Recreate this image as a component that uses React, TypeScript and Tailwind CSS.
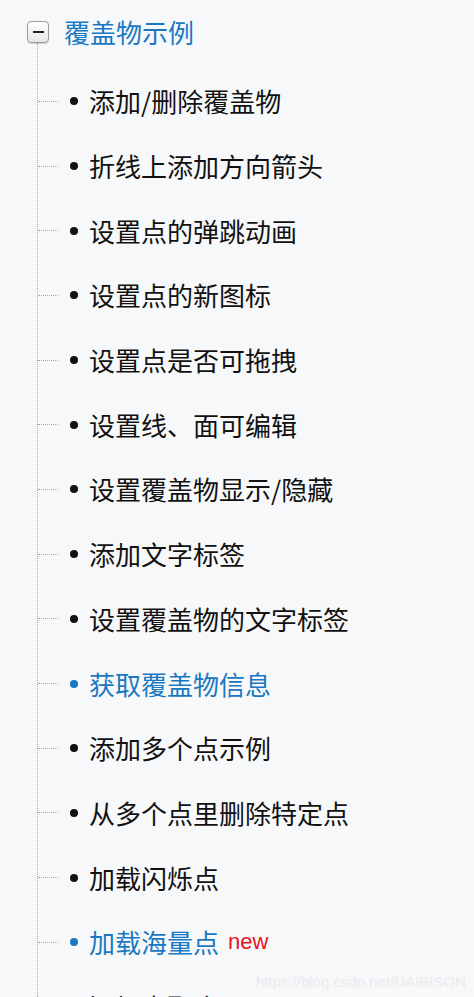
import React from "react";

const items: { text: string; active?: boolean; isNew?: boolean }[] = [
  { text: "添加/删除覆盖物" },
  { text: "折线上添加方向箭头" },
  { text: "设置点的弹跳动画" },
  { text: "设置点的新图标" },
  { text: "设置点是否可拖拽" },
  { text: "设置线、面可编辑" },
  { text: "设置覆盖物显示/隐藏" },
  { text: "添加文字标签" },
  { text: "设置覆盖物的文字标签" },
  { text: "获取覆盖物信息", active: true },
  { text: "添加多个点示例" },
  { text: "从多个点里删除特定点" },
  { text: "加载闪烁点" },
  { text: "加载海量点", active: true, isNew: true },
  { text: "添加点聚合" },
];

export default function App() {
  return (
    <div
      className="relative h-[997px] w-full overflow-hidden bg-[#f7f8fa]"
      style={{ fontFamily: '"Noto Sans CJK SC", "Noto Sans", sans-serif' }}
    >
      <div className="flex h-[63px] items-center pl-[27px]">
        <div className="flex h-[22px] w-[22px] items-center justify-center rounded-[4px] border border-[#9a9a9a] bg-gradient-to-b from-white to-[#e6e6e6] shadow-[0_1px_1px_rgba(0,0,0,0.15)]">
          <div className="h-[2px] w-[11px] bg-[#222]" />
        </div>
        <span className="ml-[15px] text-[26px] leading-none text-[#1a78c2]">覆盖物示例</span>
      </div>
      <ul className="ml-[37px] mt-[-20px] border-l border-dotted border-[#a8a8a8] pt-[26px]">
        {items.map((it, i) => (
          <li key={i} className="flex h-[64.7px] items-center">
            <div className="w-[20px] border-t border-dotted border-[#a8a8a8]" />
            <div
              className={`ml-[12px] h-[8px] w-[8px] rounded-full ${it.active ? "bg-[#1a78c2]" : "bg-[#111]"}`}
            />
            <span
              className={`ml-[11px] text-[26px] leading-none ${it.active ? "text-[#1a78c2]" : "text-[#111]"}`}
            >
              {it.text}
            </span>
            {it.isNew && (
              <span
                className="ml-[9px] text-[22px] leading-none text-[#e8141e]"
                style={{ fontFamily: '"Liberation Sans", Arial, sans-serif' }}
              >
                new
              </span>
            )}
          </li>
        ))}
      </ul>
      <div
        className="absolute bottom-[4px] right-[8px] text-[15px] text-[#eceef1]"
        style={{ fontFamily: '"Liberation Sans", Arial, sans-serif', textShadow: "0 0 1px rgba(0,0,0,0.06)" }}
      >
        https://blog.csdn.net/DAIBISON
      </div>
    </div>
  );
}
